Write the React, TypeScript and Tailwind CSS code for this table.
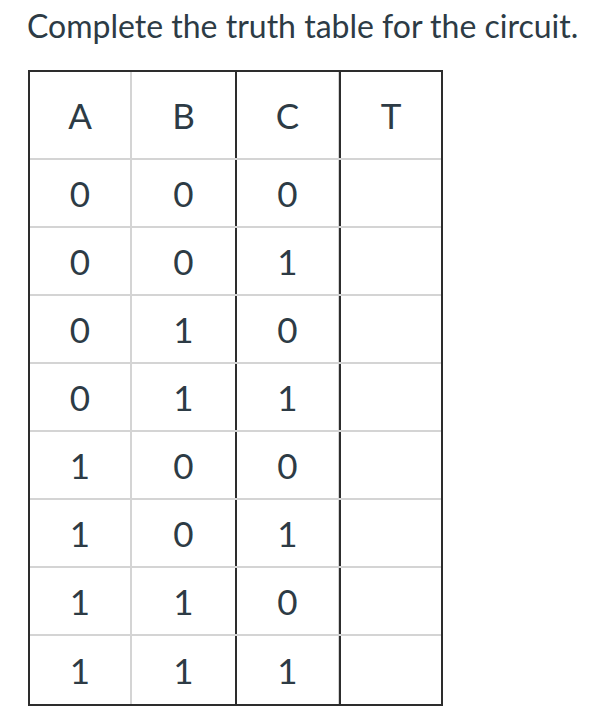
const rows = [
  ['0', '0', '0'],
  ['0', '0', '1'],
  ['0', '1', '0'],
  ['0', '1', '1'],
  ['1', '0', '0'],
  ['1', '0', '1'],
  ['1', '1', '0'],
  ['1', '1', '1'],
]

const cellBase = 'flex items-center justify-center text-[35px] text-[#2d3b45]'

// per-column width + border; B|C and C|T are drawn dark in the original
const colClass = [
  'w-[102px] border-r-2 border-[#d4d4d4]',
  'w-[105px] border-r-2 border-[#2d2d2d]',
  'w-[102px] border-r border-[#d4d4d4]',
  'w-[102px] border-l-2 border-[#2d2d2d]',
]

function Row({ cells, header, last }: { cells: string[]; header?: boolean; last?: boolean }) {
  return (
    <div className={`flex ${header ? 'h-[88px]' : 'h-[68px]'} ${last ? '' : 'border-b-2 border-[#d4d4d4]'}`}>
      {cells.map((c, i) => (
        <div key={i} className={`${cellBase} ${colClass[i]}`}>
          {c}
        </div>
      ))}
    </div>
  )
}

export default function App() {
  return (
    <div className="bg-white min-h-[720px] pt-[5px]" style={{ fontFamily: 'Lato, "Noto Sans", sans-serif' }}>
      <h1 className="pl-[27px] text-[32px] leading-[42px] text-[#2d3b45]">
        Complete the truth table for the circuit.
      </h1>
      <div className="mt-[23px] ml-[28px] w-fit border-2 border-[#2d2d2d]">
        <Row cells={['A', 'B', 'C', 'T']} header />
        {rows.map((r, i) => (
          <Row key={i} cells={[...r, '']} last={i === rows.length - 1} />
        ))}
      </div>
    </div>
  )
}
